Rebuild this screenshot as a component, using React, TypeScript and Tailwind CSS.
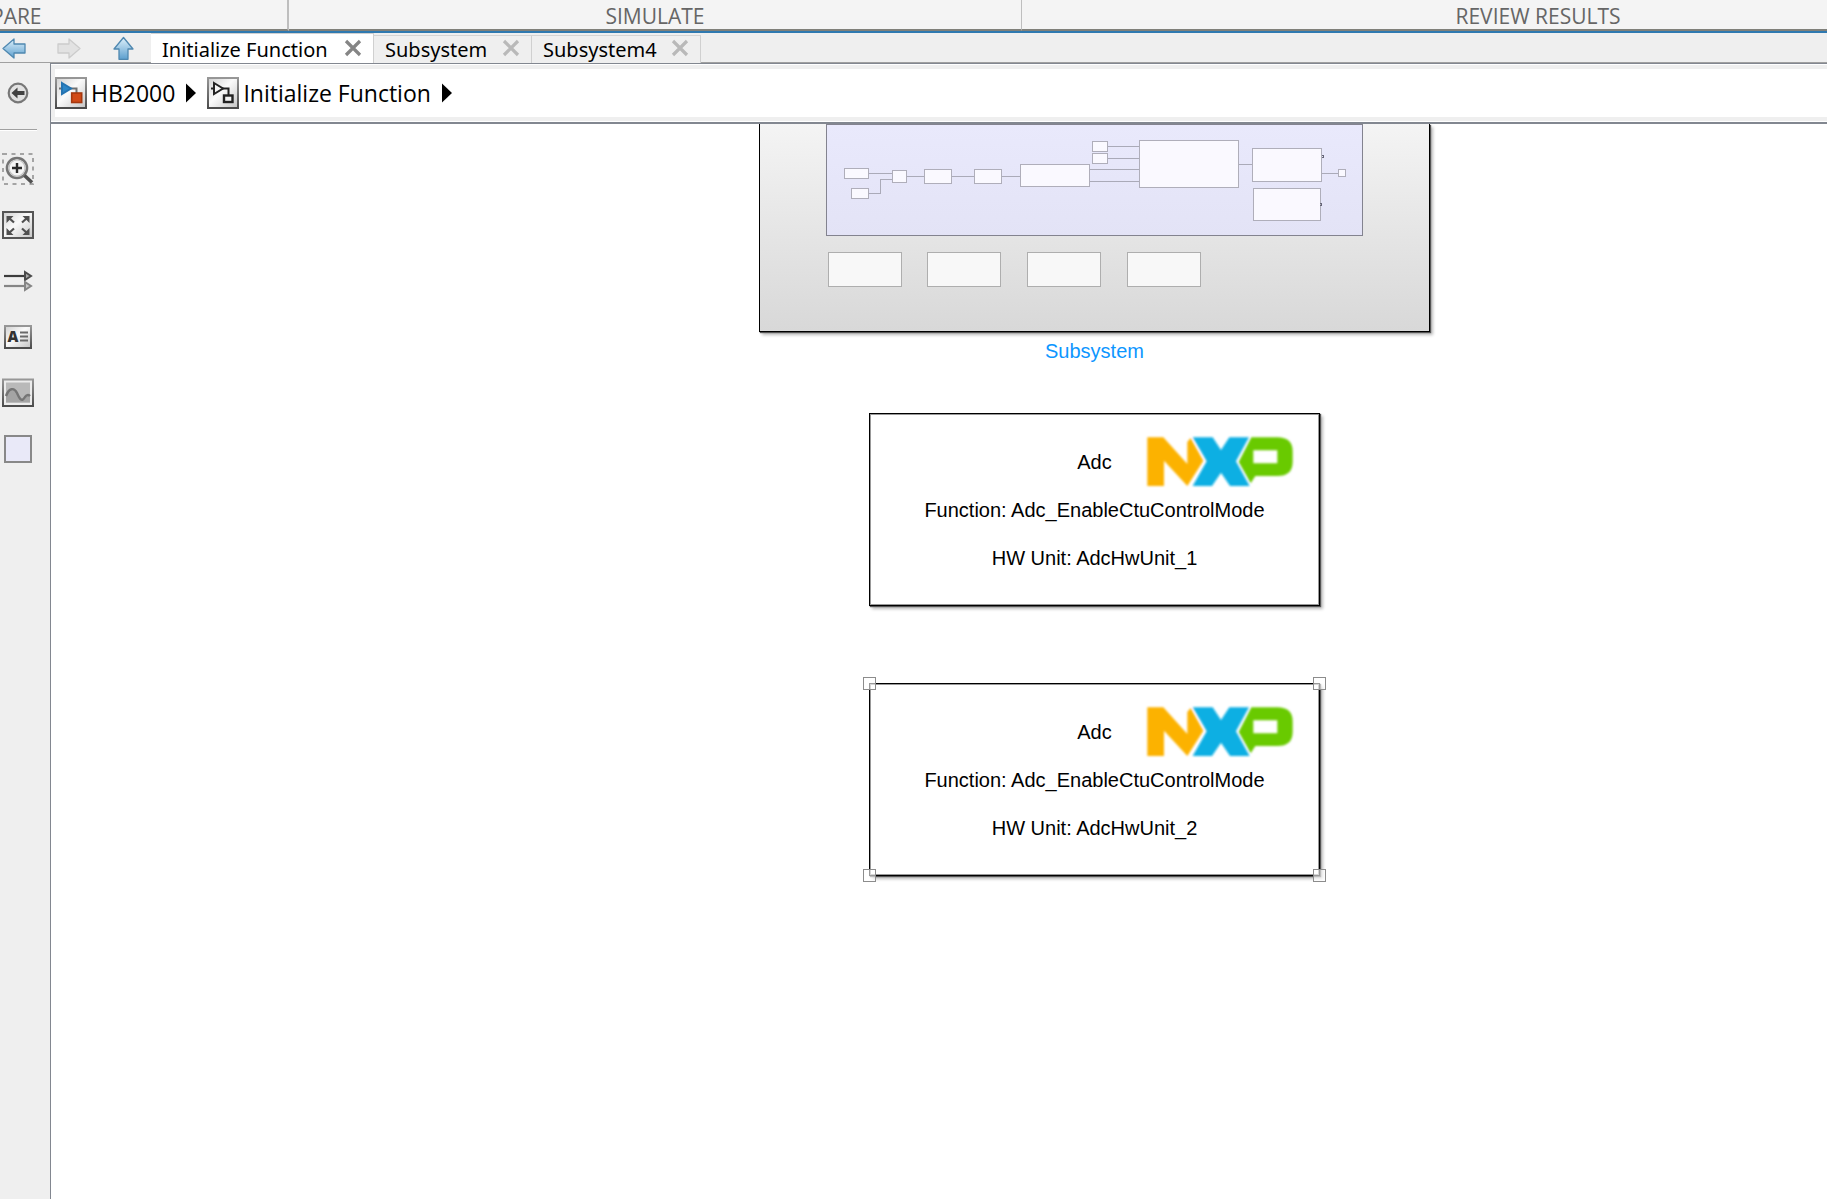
import type { ReactNode } from "react";

const previewBoxes = [
  [844, 168, 24, 10],
  [851, 188, 17, 10],
  [892, 170, 14, 12],
  [924, 169, 27, 14],
  [974, 169, 27, 14],
  [1020, 164, 69, 22],
  [1092, 141, 15, 10],
  [1092, 153, 15, 10],
  [1139, 140, 99, 47],
  [1252, 148, 69, 33],
  [1253, 188, 67, 32],
  [1338, 169, 7, 7],
];

const previewWires = [
  "M868 173H892",
  "M868 193H880V179H892",
  "M906 176H924",
  "M951 176H974",
  "M1001 176H1021",
  "M1089 169H1139",
  "M1089 181H1139",
  "M1107 146H1139",
  "M1107 158H1139",
  "M1238 164H1252",
  "M1321 173H1338",
];

const tabs = [
  { label: "Initialize Function", active: true, className: "w-[223px] border-t-[#d0d0d0] bg-white pt-0.5" },
  { label: "Subsystem", active: false, className: "mt-0.5 w-[158px] border-t-[#d4d4d4] bg-[#efefef]" },
  { label: "Subsystem4", active: false, className: "mt-0.5 w-[169px] border-t-[#d4d4d4] bg-[#efefef]" },
];

const blocks = [
  { unit: "AdcHwUnit_1", className: "top-[289px]", selected: false },
  { unit: "AdcHwUnit_2", className: "top-[559px]", selected: true },
];

const handleCorners = [
  "-left-[7px] -top-[7px]",
  "-right-[7px] -top-[7px]",
  "-left-[7px] -bottom-[7px]",
  "-right-[7px] -bottom-[7px]",
];

function Gradients() {
  return (
    <svg className="absolute" width="0" height="0" aria-hidden="true">
      <defs>
        <linearGradient id="arrowBlue" x1="0" y1="0" x2="0" y2="1">
          <stop offset="0" stopColor="#dff1fb" />
          <stop offset="1" stopColor="#5c9fce" />
        </linearGradient>
        <linearGradient id="chip" x1="0" y1="0" x2="1" y2="1">
          <stop offset="0" stopColor="#d0d0d0" />
          <stop offset="0.45" stopColor="#fafafa" />
          <stop offset="1" stopColor="#c4c4c4" />
        </linearGradient>
        <linearGradient id="chipEdge" x1="0" y1="0" x2="0" y2="1">
          <stop offset="0" stopColor="#979797" />
          <stop offset="1" stopColor="#4c4c4c" />
        </linearGradient>
        <linearGradient id="preview" x1="0" y1="0" x2="0" y2="1">
          <stop offset="0" stopColor="#e9e9fc" />
          <stop offset="1" stopColor="#e3e3f6" />
        </linearGradient>
        <filter id="soft" x="-5%" y="-5%" width="110%" height="110%">
          <feGaussianBlur stdDeviation="3.5" />
        </filter>
      </defs>
    </svg>
  );
}

function ArrowIcon({ disabled }: { disabled?: boolean }) {
  return (
    <svg width="24" height="24" viewBox="0 0 24 24" aria-hidden="true">
      <path
        d="M1 12.5L12 3V8H23V17H12V22Z"
        fill={disabled ? "#e2e2e2" : "url(#arrowBlue)"}
        stroke={disabled ? "#cccccc" : "#4f88b0"}
        strokeWidth="1.3"
        strokeLinejoin="round"
      />
    </svg>
  );
}

function UpIcon() {
  return (
    <svg width="24" height="24" viewBox="0 0 24 24" aria-hidden="true">
      <path
        d="M11.5 1.5L21 13H16V23.3H7V13H2Z"
        fill="url(#arrowBlue)"
        stroke="#4f88b0"
        strokeWidth="1.3"
        strokeLinejoin="round"
      />
    </svg>
  );
}

function ModelIcon({ colored }: { colored?: boolean }) {
  const line = colored ? "#707070" : "#222222";
  return (
    <svg width="32" height="32" viewBox="0 0 32 32" className="shrink-0" aria-hidden="true">
      <rect x="1" y="1" width="30" height="30" fill="url(#chip)" stroke="url(#chipEdge)" strokeWidth="2" />
      <path d="M4 11.5H7M15 11.5H21.5V18" fill="none" stroke={line} strokeWidth="2" />
      <path
        d="M7 6L16 11.5L7 17Z"
        fill={colored ? "#2d86c6" : "#f4f4f4"}
        stroke={colored ? "#2474b2" : "#222222"}
        strokeWidth="2"
      />
      {colored ? (
        <rect x="16.7" y="16" width="10" height="9.5" fill="#d24a17" stroke="#a5380f" strokeWidth="1.6" />
      ) : (
        <rect x="17" y="18.500" width="8.5" height="6.500" fill="#f4f4f4" stroke="#222222" strokeWidth="2.4" />
      )}
    </svg>
  );
}

function Caret() {
  return (
    <svg width="10" height="20" viewBox="0 0 10 20" className="shrink-0" aria-hidden="true">
      <path d="M0 0.5L10 10L0 19.5Z" fill="#000" />
    </svg>
  );
}

function CollapseIcon() {
  return (
    <svg width="32" height="32" viewBox="0 0 32 32" aria-hidden="true">
      <circle cx="16" cy="17" r="9.3" fill="#e2e2e2" stroke="#777777" strokeWidth="2.2" />
      <path d="M9.5 17L15.5 11.5V15H22.5V19H15.5V22.5Z" fill="#424242" />
    </svg>
  );
}

function ZoomIcon() {
  return (
    <svg width="32" height="32" viewBox="0 0 32 32" aria-hidden="true">
      <rect x="1" y="1" width="30" height="30" fill="none" stroke="#a4a4a4" strokeWidth="2" strokeDasharray="4 4.5" />
      <circle cx="15" cy="15" r="10" fill="#f5f5f5" stroke="#757575" strokeWidth="2.6" />
      <circle cx="15" cy="15" r="8" fill="none" stroke="#c4c4c4" strokeWidth="1.2" />
      <path d="M15 10V20M10 15H20" stroke="#2b2b2b" strokeWidth="2.4" />
      <path d="M22.5 22.5L30 29.5" stroke="#505050" strokeWidth="3.6" />
    </svg>
  );
}

function FitIcon() {
  return (
    <svg width="32" height="32" viewBox="0 0 32 32" aria-hidden="true">
      <rect x="1" y="3" width="30" height="26" fill="url(#chip)" stroke="#555555" strokeWidth="2" />
      <path d="M4.500 7H11.500L4.500 14ZM27.500 7H20.500L27.500 14ZM4.500 26H11.500L4.500 19ZM27.500 26H20.500L27.500 19Z" fill="#505050" />
      <path d="M7 9L12 13.500M25 9L20 13.500M7 24L12 19.500M25 24L20 19.500" stroke="#505050" strokeWidth="2.200" />
    </svg>
  );
}

function SignalIcon() {
  return (
    <svg width="32" height="32" viewBox="0 0 32 32" fill="none" aria-hidden="true">
      <path d="M2 11H25" stroke="#3c3c3c" strokeWidth="2.2" />
      <path d="M23 7L29 11L23 15Z" fill="#a8a8a8" stroke="#4a4a4a" strokeWidth="2" />
      <path d="M2 21H25" stroke="#858585" strokeWidth="2.2" />
      <path d="M23 17L29 21L23 25Z" fill="#c8c8c8" stroke="#858585" strokeWidth="2" />
    </svg>
  );
}

function AnnotationIcon() {
  return (
    <svg width="32" height="32" viewBox="0 0 32 32" aria-hidden="true">
      <rect x="3" y="5" width="26" height="22" fill="url(#chip)" stroke="url(#chipEdge)" strokeWidth="2" />
      <text x="5.5" y="20.5" fontFamily="Open Sans, sans-serif" fontSize="15" fontWeight="800" fill="#333333">
        A
      </text>
      <path d="M18 11.5H26M18 15.5H26M18 19.5H26" stroke="#6a6a6a" strokeWidth="2" />
    </svg>
  );
}

function ImageIcon() {
  return (
    <svg width="32" height="32" viewBox="0 0 32 32" aria-hidden="true">
      <rect x="1" y="2.5" width="30" height="26.5" fill="#ececec" stroke="url(#chipEdge)" strokeWidth="2" />
      <rect x="4" y="5.5" width="24" height="20" fill="#b9b9b9" />
      <path d="M4 19C7 11 12 10 15 16C18 23 20 25 23 20C25 17 27 18 28 19V25.5H4Z" fill="#a4a4a4" />
      <path d="M4 19C7 11 12 10 15 16C18 23 20 25 23 20C25 17 27 18 28 19" fill="none" stroke="#757575" strokeWidth="2.4" />
    </svg>
  );
}

function AreaIcon() {
  return (
    <svg width="32" height="32" viewBox="0 0 32 32" aria-hidden="true">
      <rect x="3" y="3" width="26" height="26" fill="#e9e9f8" stroke="#888888" strokeWidth="2" />
    </svg>
  );
}

function NxpLogo() {
  return (
    <svg
      className="absolute right-[24px] top-[21px]"
      width="150"
      height="53"
      viewBox="45 45 450 159"
      role="img"
      aria-label="NXP"
    >
      <g filter="url(#soft)">
        <path d="M52 52H100L172 132V66L182 54L220 122L172 198L102 122V198H52Z" fill="#fcb200" />
        <path d="M364 52H442Q488 52 488 94V126Q488 168 442 168H376L362 190L326 126ZM370 91V130H442V91Z" fill="#69ca00" fillRule="evenodd" />
        <path d="M188 52H248L273 90L298 52H357L318 124L359 198H300L273 158L246 198H188L230 124Z" fill="#0eafe3" />
      </g>
    </svg>
  );
}

function ToolButton({ label, children }: { label: string; children: ReactNode }) {
  return (
    <button type="button" aria-label={label} className="block size-8">
      {children}
    </button>
  );
}

function Ribbon() {
  return (
    <header className="flex h-[33px] overflow-hidden border-b-2 border-[#2f79b0] bg-[#f4f4f4] font-['Open_Sans',sans-serif] text-[21px] leading-8 text-[#666666]">
      <div className="w-[289px] shrink-0 border-b-2 border-r-2 border-b-[#80807a] border-r-[#bebebe]">
        <span className="-ml-[9px]">PARE</span>
      </div>
      <div className="w-[733px] shrink-0 border-b-2 border-r border-b-[#80807a] border-r-[#bebebe] text-center">SIMULATE</div>
      <div className="w-[1032px] shrink-0 border-b-2 border-b-[#80807a] text-center">REVIEW RESULTS</div>
    </header>
  );
}

function TabBar() {
  return (
    <div className="flex h-[30px] bg-[#efefef]">
      <div className="flex w-[151px] shrink-0 items-center gap-[31px] border-b border-[#a0a0a0] pl-0.5">
        <button type="button" aria-label="Back">
          <ArrowIcon />
        </button>
        <button type="button" aria-label="Forward" className="-scale-x-100" disabled>
          <ArrowIcon disabled />
        </button>
        <button type="button" aria-label="Up">
          <UpIcon />
        </button>
      </div>
      {tabs.map((tab) => (
        <div
          key={tab.label}
          className={`flex shrink-0 items-center justify-between border-r border-t border-r-[#d0d0d0] px-[11px] ${tab.className}`}
        >
          <button type="button" className="whitespace-nowrap font-['Noto_Sans',sans-serif] text-[20px] leading-7 text-black">
            {tab.label}
          </button>
          <button type="button" aria-label={`Close ${tab.label}`} className="pb-1">
            <svg width="18" height="18" viewBox="0 0 18 18" aria-hidden="true">
              <path d="M2 2L16 16M16 2L2 16" stroke={tab.active ? "#858585" : "#b9b9b9"} strokeWidth="3.2" />
            </svg>
          </button>
        </div>
      ))}
      <div className="flex-1 border-b border-[#a0a0a0]" />
    </div>
  );
}

function Sidebar() {
  return (
    <aside className="w-[50px] shrink-0 bg-[#efefef] pt-[13px]">
      <div className="pl-0.5">
        <ToolButton label="Hide browser">
          <CollapseIcon />
        </ToolButton>
      </div>
      <div className="mr-[13px] mt-[21px] h-0.5 border-b border-t border-b-white border-t-[#a0a0a0]" />
      <div className="mt-[22px] flex flex-col gap-6 pl-0.5">
        <ToolButton label="Zoom">
          <ZoomIcon />
        </ToolButton>
        <ToolButton label="Fit to view">
          <FitIcon />
        </ToolButton>
        <ToolButton label="Sample time">
          <SignalIcon />
        </ToolButton>
        <ToolButton label="Annotation">
          <AnnotationIcon />
        </ToolButton>
        <ToolButton label="Image">
          <ImageIcon />
        </ToolButton>
        <ToolButton label="Area">
          <AreaIcon />
        </ToolButton>
      </div>
    </aside>
  );
}

function Breadcrumb() {
  return (
    <nav className="border-b-2 border-[#828790] bg-white py-px">
      <div className="border-y-4 border-l-4 border-[#efefef] bg-white font-['Open_Sans',sans-serif] text-[23px] text-black">
        <div className="flex h-12 items-center gap-[11px]">
          <a href="#HB2000" className="flex items-center gap-1">
            <ModelIcon colored />
            HB2000
          </a>
          <Caret />
          <a href="#InitializeFunction" className="flex items-center gap-1">
            <ModelIcon />
            Initialize Function
          </a>
          <Caret />
        </div>
      </div>
    </nav>
  );
}

function SubsystemBlock() {
  return (
    <div className="absolute left-[708px] top-0">
      <div className="border border-t-0 border-black bg-linear-to-b from-[#f4f4f4] to-[#d8d8d8] shadow-[1px_1px_1px_#555,3px_3px_3px_#bbb]">
        <svg width="669" height="207" viewBox="760 124 669 207" fill="none" shapeRendering="crispEdges" aria-hidden="true">
          <rect x="826.5" y="124.5" width="536" height="111" fill="url(#preview)" stroke="#83838f" />
          {previewWires.map((d) => (
            <path key={d} d={d} transform="translate(0.5 0.5)" stroke="#aaaab8" />
          ))}
          {previewBoxes.map(([x, y, w, h]) => (
            <rect key={`${x}-${y}`} x={x + 0.5} y={y + 0.5} width={w} height={h} fill="#faf9ff" stroke="#afaeba" />
          ))}
          <path d="M1322 155H1323V157H1322M1320 203H1321V205H1320" stroke="#666677" />
          {[828, 927, 1027, 1127].map((x) => (
            <rect key={x} x={x + 0.5} y="252.5" width="73" height="34" fill="#f8f8f8" stroke="#aeaeae" />
          ))}
        </svg>
      </div>
      <p className="mt-1 text-center text-[20px] leading-[30px] text-[#0d96ff]">Subsystem</p>
    </div>
  );
}

function AdcBlock({ unit, selected, className }: { unit: string; selected: boolean; className: string }) {
  return (
    <div
      className={`absolute left-[818px] h-[193px] w-[451px] border border-black bg-white pt-6 text-center text-[20px] leading-[48px] text-black shadow-[inset_0_0_0_1px_#999,1px_1px_1px_#555,3px_3px_3px_#bbb] ${className}`}
    >
      <p>Adc</p>
      <p>Function: Adc_EnableCtuControlMode</p>
      <p>HW Unit: {unit}</p>
      <NxpLogo />
      {selected &&
        handleCorners.map((corner) => (
          <span key={corner} className={`absolute size-[13px] border border-[#8c8c8c] bg-white/60 ${corner}`} />
        ))}
    </div>
  );
}

export default function App() {
  return (
    <div className="flex min-h-screen flex-col overflow-hidden bg-white">
      <Gradients />
      <Ribbon />
      <TabBar />
      <div className="flex flex-1">
        <Sidebar />
        <div className="flex min-w-0 flex-1 flex-col border-l border-t border-[#828790]">
          <Breadcrumb />
          <main className="relative flex-1 overflow-hidden bg-white font-['Liberation_Sans',Arial,sans-serif]">
            <SubsystemBlock />
            {blocks.map((block) => (
              <AdcBlock key={block.unit} {...block} />
            ))}
          </main>
        </div>
      </div>
    </div>
  );
}
